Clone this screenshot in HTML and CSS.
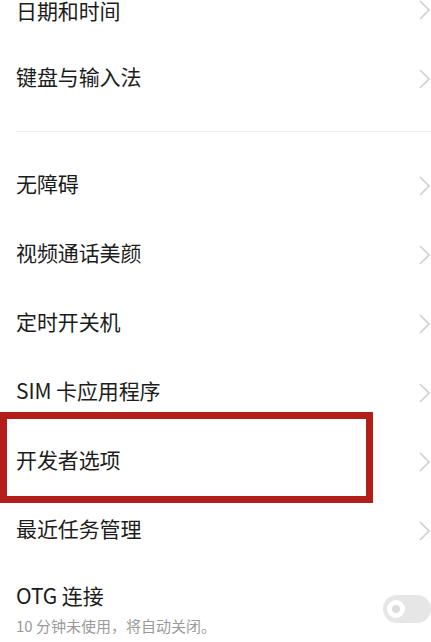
FILE: index.html
```html
<!DOCTYPE html>
<html lang="zh-CN">
<head>
<meta charset="utf-8">
<title>设置</title>
<link rel="stylesheet" href="styles.css">
</head>
<body>
<div class="screen">
  <div class="list">
    <div class="row row-first"><span class="label">日期和时间</span><svg class="chev" viewBox="0 0 11 20"><path d="M1 1 L10 10 L1 19"/></svg></div>
    <div class="row"><span class="label">键盘与输入法</span><svg class="chev" viewBox="0 0 11 20"><path d="M1 1 L10 10 L1 19"/></svg></div>
    <div class="divider"></div>
    <div class="row"><span class="label">无障碍</span><svg class="chev" viewBox="0 0 11 20"><path d="M1 1 L10 10 L1 19"/></svg></div>
    <div class="row"><span class="label">视频通话美颜</span><svg class="chev" viewBox="0 0 11 20"><path d="M1 1 L10 10 L1 19"/></svg></div>
    <div class="row"><span class="label">定时开关机</span><svg class="chev" viewBox="0 0 11 20"><path d="M1 1 L10 10 L1 19"/></svg></div>
    <div class="row"><span class="label">SIM 卡应用程序</span><svg class="chev" viewBox="0 0 11 20"><path d="M1 1 L10 10 L1 19"/></svg></div>
    <div class="row highlighted"><span class="label">开发者选项</span><svg class="chev" viewBox="0 0 11 20"><path d="M1 1 L10 10 L1 19"/></svg><div class="mark"></div></div>
    <div class="row"><span class="label">最近任务管理</span><svg class="chev" viewBox="0 0 11 20"><path d="M1 1 L10 10 L1 19"/></svg></div>
    <div class="row row-switch">
      <div class="texts">
        <div class="label title">OTG 连接</div>
        <div class="sub">10 分钟未使用，将自动关闭。</div>
      </div>
      <div class="toggle"><div class="knob"></div></div>
    </div>
  </div>
</div>
</body>
</html>
```
FILE: styles.css
```css
html, body {
  margin: 0;
  padding: 0;
  background: #ffffff;
}
body {
  width: 431px;
  height: 642px;
  overflow: hidden;
  font-family: "Noto Sans CJK SC", "Noto Sans", sans-serif;
  color: #1c1c1c;
}
.screen {
  width: 431px;
  height: 642px;
  overflow: hidden;
}
.list {
  margin-top: -25px;
  display: flex;
  flex-direction: column;
}
.row {
  height: 69px;
  display: flex;
  align-items: center;
  justify-content: space-between;
  padding-left: 16px;
  padding-right: 1px;
  padding-bottom: 5px;
  box-sizing: border-box;
}
.row-first {
  padding-bottom: 0;
}
.row .chev {
  margin-top: 5px;
}
.row-first .chev {
  margin-top: 0;
}
.label {
  font-size: 21px;
  line-height: 28px;
  letter-spacing: -0.1px;
}
.row-first .label {
  line-height: 18px;
}
.chev {
  width: 11px;
  height: 20px;
  fill: none;
  stroke: #cfcfcf;
  stroke-width: 1.6;
}
.divider {
  height: 1px;
  background: #ececec;
  margin: 18px 0 19px 16px;
}
.highlighted {
  position: relative;
}
.mark {
  position: absolute;
  left: 0;
  top: -15px;
  width: 373px;
  height: 91px;
  border: 7px solid #b21f1a;
  box-sizing: border-box;
}
.row-switch {
  height: 78px;
  padding-right: 0;
  padding-bottom: 0;
  align-items: flex-start;
}
.texts {
  display: flex;
  flex-direction: column;
  padding-top: 17px;
}
.title {
  line-height: 26px;
}
.sub {
  margin-top: 7px;
  font-size: 15px;
  line-height: 22px;
  color: #9a9a9a;
}
.toggle {
  margin-top: 30px;
  width: 48px;
  height: 28px;
  border-radius: 14px;
  background: #e6e6e6;
  display: flex;
  align-items: center;
  padding-left: 4px;
  box-sizing: border-box;
}
.knob {
  width: 18px;
  height: 18px;
  border-radius: 50%;
  background: #dcdcdc;
  border: 5px solid #ffffff;
  box-sizing: border-box;
}
```
